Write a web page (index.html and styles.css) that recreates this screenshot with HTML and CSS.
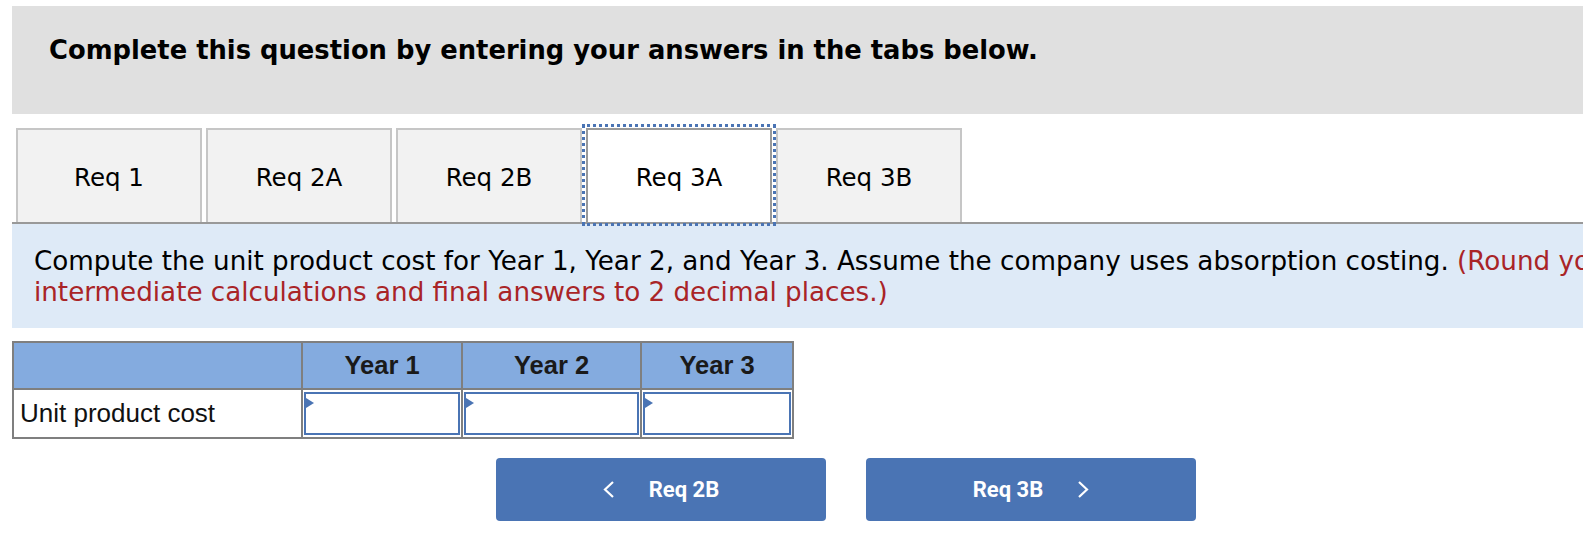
FILE: index.html
```html
<!DOCTYPE html>
<html>
<head>
<meta charset="utf-8">
<link rel="stylesheet" href="styles.css">
</head>
<body>
<div class="page">
  <div class="banner">Complete this question by entering your answers in the tabs below.</div>

  <div class="tabs">
    <div class="tab">Req 1</div>
    <div class="tab">Req 2A</div>
    <div class="tab">Req 2B</div>
    <div class="tab active">Req 3A</div>
    <div class="tab">Req 3B</div>
  </div>

  <div class="prompt">
    <span class="line">Compute the unit product cost for Year 1, Year 2, and Year 3. Assume the company uses absorption costing. <span class="red">(Round your</span></span>
    <span class="line red">intermediate calculations and final answers to 2 decimal places.)</span>
  </div>

  <table class="grid">
    <tr class="head">
      <th class="c1"></th>
      <th class="c2">Year 1</th>
      <th class="c3">Year 2</th>
      <th class="c4">Year 3</th>
    </tr>
    <tr>
      <td class="label">Unit product cost</td>
      <td class="input"><div class="box"><span class="flag"></span></div></td>
      <td class="input"><div class="box"><span class="flag"></span></div></td>
      <td class="input"><div class="box"><span class="flag"></span></div></td>
    </tr>
  </table>

  <div class="nav">
    <div class="btn">
      <svg class="chev" width="12" height="17" viewBox="0 0 12 17"><polyline points="10,1 2,8.5 10,16" fill="none" stroke="#fff" stroke-width="2.2"/></svg>
      <span>Req 2B</span>
    </div>
    <div class="btn">
      <span>Req 3B</span>
      <svg class="chev" width="12" height="17" viewBox="0 0 12 17"><polyline points="2,1 10,8.5 2,16" fill="none" stroke="#fff" stroke-width="2.2"/></svg>
    </div>
  </div>
</div>
</body>
</html>
```

FILE: styles.css
```css
html, body {
  margin: 0;
  padding: 0;
  background: #fff;
}

.page {
  padding: 6px 13px 0 12px;
  font-family: "DejaVu Sans", Verdana, sans-serif;
  color: #000;
}

.banner {
  background: #e0e0e0;
  height: 108px;
  box-sizing: border-box;
  padding: 28px 0 0 37px;
  font-weight: bold;
  font-size: 25.8px;
  line-height: 32px;
}

.tabs {
  margin-top: 14px;
  display: flex;
  gap: 4px;
  padding-left: 4px;
  border-bottom: 2px solid #999;
  height: 94px;
}

.tab {
  width: 186px;
  box-sizing: border-box;
  height: 94px;
  border: 2px solid #c6c6c6;
  border-bottom: none;
  background: #f2f2f2;
  display: flex;
  align-items: center;
  justify-content: center;
  font-size: 24.5px;
  padding-top: 2px;
}

.tab.active {
  background: #fff;
  border-color: #9a9a9a;
  outline: 3px dotted #4a74b4;
  outline-offset: 1px;
  position: relative;
  z-index: 1;
}

.prompt {
  background: #deeaf7;
  height: 104px;
  box-sizing: border-box;
  padding: 22px 0 0 22px;
  overflow: hidden;
  font-size: 26.2px;
  line-height: 31px;
}

.prompt .line {
  display: block;
  white-space: nowrap;
}

.red {
  color: #a92427;
}

.grid {
  margin-top: 13px;
  border-collapse: collapse;
  font-family: "Liberation Sans", Arial, sans-serif;
  font-size: 25.5px;
}

.grid th, .grid td {
  border: 2px solid #7f7f7f;
  padding: 0;
}

.grid .head th {
  background: #84abdf;
  height: 45px;
  color: #1a1a1a;
  font-weight: bold;
}

.c1 { width: 287px; }
.c2 { width: 158px; }
.c3 { width: 177px; }
.c4 { width: 150px; }

.grid td {
  height: 45px;
}

.grid td.label {
  text-align: left;
  padding-left: 6px;
  color: #111;
  font-size: 26px;
}

.grid td.input {
  padding: 1px;
}

.box {
  height: 39px;
  border: 2px solid #4a74b4;
  background: #fff;
  position: relative;
}

.flag {
  position: absolute;
  left: 0;
  top: 4px;
  width: 0;
  height: 0;
  border-top: 5px solid transparent;
  border-bottom: 5px solid transparent;
  border-left: 8px solid #4a74b4;
}

.nav {
  margin-top: 19px;
  padding-left: 484px;
  display: flex;
  gap: 40px;
}

.btn {
  width: 330px;
  height: 63px;
  background: #4a74b4;
  border-radius: 4px;
  display: flex;
  align-items: center;
  justify-content: center;
  gap: 34px;
  color: #fff;
  font-family: Roboto, "Liberation Sans", sans-serif;
  font-weight: bold;
  font-size: 22px;
}

.chev {
  display: block;
}
```
